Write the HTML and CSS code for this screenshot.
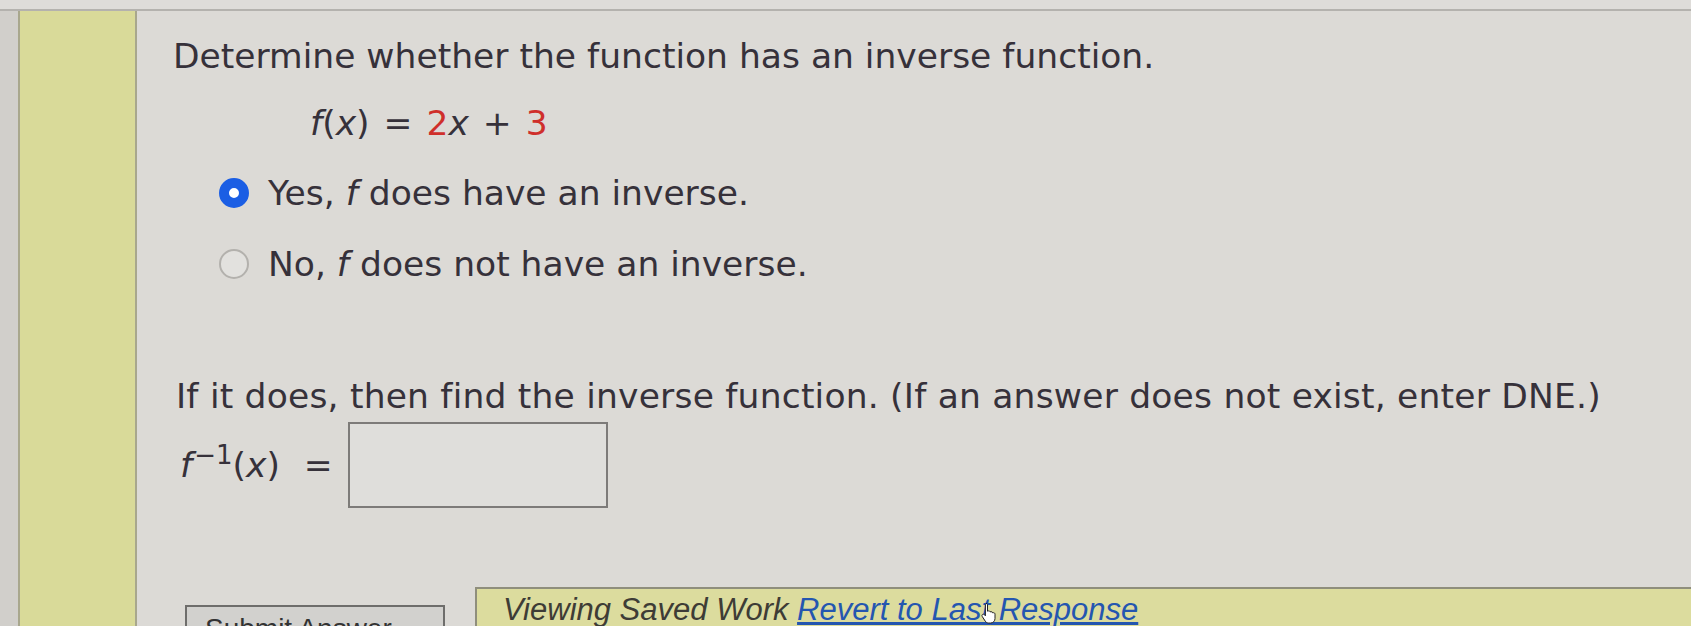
FILE: index.html
```html
<!DOCTYPE html>
<html lang="en">
<head>
<meta charset="utf-8">
<title>Inverse function</title>
<link rel="stylesheet" href="styles.css">
</head>
<body>
<div class="page">
  <div class="strip"></div>
  <div class="panel"></div>
  <main class="main">
    <p class="question">Determine whether the function has an inverse function.</p>
    <p class="equation"><i>f</i>(<i>x</i>)<span class="op">=</span><span class="red">2</span><i>x</i><span class="op">+</span><span class="red">3</span></p>
    <div class="options">
      <label class="option">
        <span class="radio radio-on"></span>
        <span>Yes, <i>f</i> does have an inverse.</span>
      </label>
      <label class="option">
        <span class="radio"></span>
        <span>No, <i>f</i> does not have an inverse.</span>
      </label>
    </div>
    <p class="question2">If it does, then find the inverse function. (If an answer does not exist, enter DNE.)</p>
    <div class="answer">
      <span class="answer-label"><i>f</i><sup>−1</sup>(<i>x</i>)<span class="eq-sign">=</span></span>
      <span class="answer-box"></span>
    </div>
    <div class="footer">
      <div class="submit">Submit Answer</div>
      <div class="saved">Viewing Saved Work <a class="revert" href="#">Revert to Last<span class="cursor"><svg width="16" height="22" viewBox="0 0 16 22"><path d="M5 1.5c.9 0 1.5.6 1.5 1.5v6.2l1-.3c.8-.2 1.5.3 1.6 1l1-.2c.8-.1 1.4.4 1.5 1.1l.8-.1c.9-.1 1.6.6 1.6 1.5v4.3c0 2.6-1.9 4.5-4.5 4.5H7.6c-1.5 0-2.6-.7-3.4-1.9L1.2 14.4c-.5-.8-.2-1.8.6-2.1.6-.3 1.3-.1 1.7.4l.9 1.1V3c0-.9.6-1.5 1.5-1.5z" fill="#fff" stroke="#222" stroke-width="1"/></svg></span> Response</a></div>
    </div>
  </main>
</div>
</body>
</html>
```

FILE: styles.css
```css
html, body {
  margin: 0;
  padding: 0;
  height: 626px;
  overflow: hidden;
  background: #dedcd9;
}

.page {
  display: flex;
  height: 626px;
  box-sizing: border-box;
  margin-top: 9px;
  border-top: 2px solid #b4b2ae;
  font-family: "DejaVu Sans", Verdana, sans-serif;
  color: #36313a;
}

.strip {
  width: 18px;
  flex: none;
  background: #d1cfcb;
}

.panel {
  width: 115px;
  flex: none;
  background: #d9da99;
  border-left: 2px solid #a8a78d;
  border-right: 2px solid #a8a78d;
}

.main {
  flex: 1;
  display: flex;
  flex-direction: column;
  padding-left: 36px;
  background: #dcdad6;
  font-size: 34.5px;
  line-height: 40px;
}

.question {
  margin: 25px 0 0 0;
}

.equation {
  margin: 27px 0 0 137px;
}

.op {
  margin: 0 14px;
}

.red {
  color: #cf2f2b;
}

.options {
  display: flex;
  flex-direction: column;
  gap: 31px;
  margin: 30px 0 0 46px;
}

.option {
  display: flex;
  align-items: center;
  gap: 19px;
}

.radio {
  width: 30px;
  height: 30px;
  box-sizing: border-box;
  border-radius: 50%;
  border: 2px solid #b3b1ad;
  background: #e2e1de;
  flex: none;
}

.radio-on {
  border: 10px solid #1b5ee4;
  background: #ffffff;
}

.question2 {
  margin: 92px 0 0 3px;
  letter-spacing: 0.2px;
}

.answer {
  display: flex;
  align-items: center;
  gap: 15px;
  margin: 6px 0 0 7px;
  height: 86px;
}

.answer-label sup {
  font-size: 26px;
  line-height: 0;
  vertical-align: 13px;
  margin-left: 2px;
}

.eq-sign {
  margin-left: 24px;
}

.answer-box {
  width: 260px;
  height: 86px;
  box-sizing: border-box;
  border: 2px solid #7d7b79;
  background: #dfdedb;
}

.footer {
  display: flex;
  align-items: flex-start;
  gap: 30px;
  margin-top: 79px;
  font-family: "Liberation Sans", Arial, sans-serif;
}

.submit {
  margin: 18px 0 0 12px;
  width: 260px;
  height: 60px;
  box-sizing: border-box;
  border: 2px solid #6e6d6b;
  background: #d2d1ce;
  padding: 6px 0 0 18px;
  font-size: 28px;
  line-height: 32px;
  color: #333;
}

.saved {
  flex: 1;
  height: 80px;
  box-sizing: border-box;
  border-top: 2px solid #8f8e7c;
  border-left: 2px solid #8f8e7c;
  background: #dcdc9e;
  padding: 4px 0 0 26px;
  font-size: 31px;
  font-style: italic;
  line-height: 34px;
  color: #3e3c36;
}

.revert {
  color: #2456b0;
  text-decoration: underline;
}

.cursor {
  position: relative;
  display: inline-block;
  width: 0;
  height: 0;
}

.cursor svg {
  position: absolute;
  left: -9px;
  top: -18px;
}
```
